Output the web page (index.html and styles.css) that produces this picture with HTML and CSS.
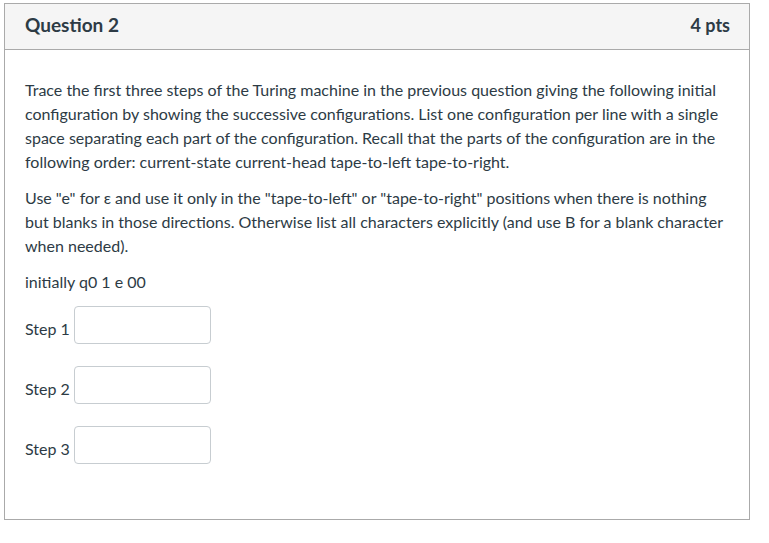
FILE: index.html
```html
<!DOCTYPE html>
<html>
<head>
<meta charset="utf-8">
<link rel="stylesheet" href="styles.css">
</head>
<body>
<div class="card">
  <div class="card-header">
    <span class="title">Question 2</span>
    <span class="pts">4 pts</span>
  </div>
  <div class="card-body">
    <p>Trace the first three steps of the Turing machine in the previous question giving the following initial configuration by showing the successive configurations. List one configuration per line with a single space separating each part of the configuration. Recall that the parts of the configuration are in the following order: current-state current-head tape-to-left tape-to-right.</p>
    <p>Use "e" for ε and use it only in the "tape-to-left" or "tape-to-right" positions when there is nothing but blanks in those directions. Otherwise list all characters explicitly (and use B for a blank character when needed).</p>
    <p class="initial">initially q0 1 e 00</p>
    <div class="step"><span class="label">Step 1</span><input class="answer" type="text"></div>
    <div class="step"><span class="label">Step 2</span><input class="answer" type="text"></div>
    <div class="step"><span class="label">Step 3</span><input class="answer" type="text"></div>
  </div>
</div>
</body>
</html>
```
FILE: styles.css
```css
html, body {
  margin: 0;
  padding: 0;
  background: #fff;
}
body {
  font-family: Lato, "Open Sans", sans-serif;
  color: #2d3b45;
  padding: 3px 0 0 4px;
}
.card {
  border: 1px solid #aaaaaa;
  box-sizing: border-box;
  width: 746px;
  height: 517px;
}
.card-header {
  background: #f5f5f5;
  border-bottom: 1px solid #aaaaaa;
  box-sizing: content-box;
  display: flex;
  align-items: center;
  justify-content: space-between;
  padding: 0 19px 4px 20px;
  height: 41px;
}
.title {
  font-weight: 700;
  font-size: 19px;
}
.pts {
  font-weight: 700;
  font-size: 18px;
}
.card-body {
  padding: 16px 20px 0 20px;
  font-size: 16px;
  line-height: 24px;
}
.card-body p {
  margin: 12px 0 12px;
}
.step {
  display: flex;
  align-items: center;
  gap: 4px;
  margin-top: 0;
  margin-bottom: 22px;
}
.label {
  padding-top: 8px;
}
.answer {
  width: 137px;
  height: 38px;
  box-sizing: border-box;
  border: 1px solid #c7cdd1;
  border-radius: 4px;
  background: #fff;
  margin: 0;
  padding: 0 6px;
}
```
